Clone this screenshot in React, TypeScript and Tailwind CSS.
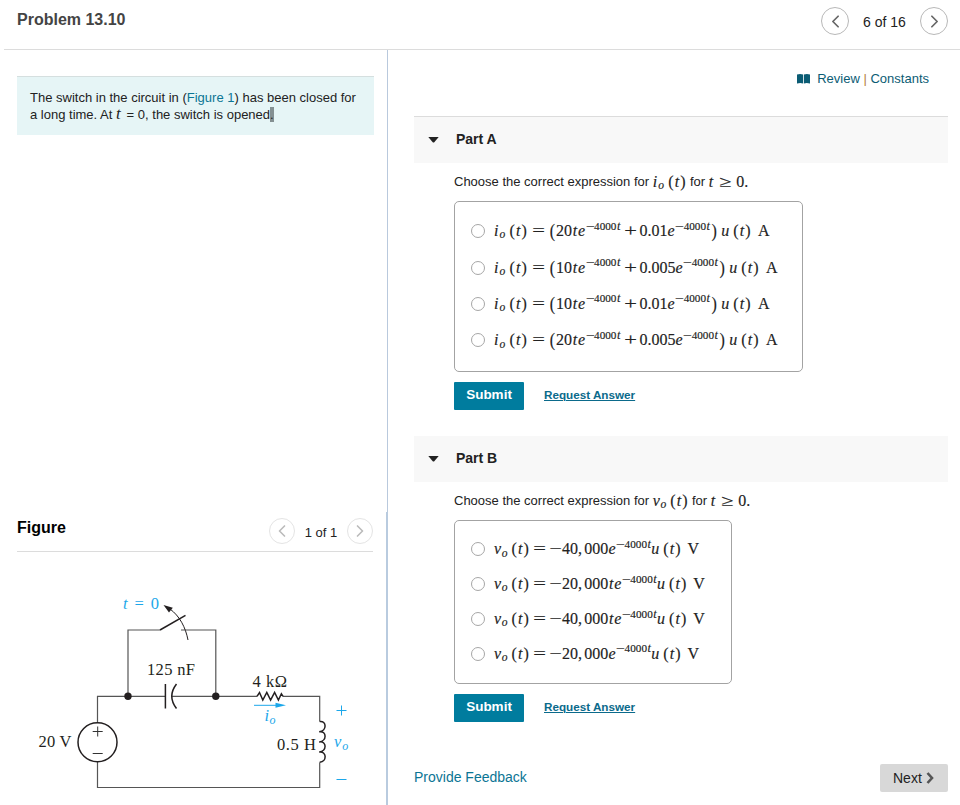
import { useState, type ReactNode } from 'react';
import { ChevronLeft, ChevronRight } from 'lucide-react';
import clsx from 'clsx';

// Stretched operators, wider than the ones in the text font
const Op = ({ children, className }: { children: ReactNode; className?: string }) => (
    <span className={clsx('inline-block w-[0.78em] text-center', className)}>
        <span className="inline-block scale-x-[1.4]">{children}</span>
    </span>
);

const Fn = ({ name }: { name: 'i' | 'v' }) => (
    <>
        <span className={clsx('inline-block italic', name === 'i' ? 'w-[0.35em]' : 'w-[0.48em]')}>{name}</span>
        <sub className="relative -bottom-[0.2em] inline-block w-[0.56em] align-baseline text-[0.72em] italic leading-none">o</sub>
    </>
);

const Arg = () => (
    <span className="ml-[0.19em] mr-[0.02em] inline-block">
        <span className="inline-block w-[0.39em] text-center">(</span>
        <span className="inline-block w-[0.36em] text-center italic">t</span>
        <span className="inline-block w-[0.39em] text-center">)</span>
    </span>
);

const Exp = () => (
    <sup className="relative -top-[0.58em] inline-block align-baseline text-[0.7em] leading-none">
        <Op>−</Op>4000<span className="inline-block w-[0.36em] text-center text-[1.1em] italic leading-none">t</span>
    </sup>
);

const Paren = ({ children }: { children: string }) => (
    <span className="inline-block w-[0.46em] origin-center scale-y-[1.2] text-center">{children}</span>
);

const Term = ({ coef, withT }: { coef: string; withT?: boolean }) => (
    <>
        <span>{coef}</span>
        {withT && <span className="inline-block w-[0.36em] text-center italic">t</span>}
        <span className="inline-block w-[0.47em] text-center italic">e</span>
        <Exp />
    </>
);

const partA = [
    { first: '20', second: '0.01' },
    { first: '10', second: '0.005' },
    { first: '10', second: '0.01' },
    { first: '20', second: '0.005' },
];

const partB = [
    { coef: '40', withT: false },
    { coef: '20', withT: true },
    { coef: '40', withT: true },
    { coef: '20', withT: false },
];

const CurrentExpr = ({ first, second }: { first: string; second: string }) => (
    <>
        <Fn name="i" />
        <Arg />
        <Op className="mx-[0.27em]">=</Op>
        <Paren>(</Paren>
        <Term coef={first} withT />
        <Op className="ml-[0.22em] mr-[0.16em]">+</Op>
        <Term coef={second} />
        <Paren>)</Paren>
        <span className="ml-[0.18em] inline-block w-[0.57em] text-center italic">u</span>
        <Arg />
        <span className="ml-[0.42em]">A</span>
    </>
);

const VoltageExpr = ({ coef, withT }: { coef: string; withT: boolean }) => (
    <>
        <Fn name="v" />
        <Arg />
        <Op className="ml-[0.24em] mr-[0.22em]">=</Op>
        <Op>−</Op>
        {coef}<span className="mr-[0.15em]">,</span>
        <Term coef="000" withT={withT} />
        <span className="-ml-[0.04em] inline-block w-[0.57em] text-center italic">u</span>
        <Arg />
        <span className="ml-[0.38em]">V</span>
    </>
);

const MATH = 'whitespace-nowrap font-["Liberation_Serif",serif] text-[16px] leading-none text-[#222] [-webkit-text-stroke:0.15px]';

interface OptionsProps {
    name: string;
    className: string;
    rowClass: string;
    children: ReactNode[];
}

function Options({ name, className, rowClass, children }: OptionsProps) {
    const [selected, setSelected] = useState<number | null>(null);

    return (
        <div className={clsx('rounded-[5px] border border-[#a3a3a3] pl-4', className)}>
            {children.map((child, i) => (
                <label key={i} className={clsx('flex cursor-pointer items-center', rowClass)}>
                    <input
                        type="radio"
                        name={name}
                        checked={selected === i}
                        onChange={() => setSelected(i)}
                        className="mr-[9px] size-[14px] shrink-0 appearance-none rounded-full border border-[#a6a6a6] bg-white checked:border-4 checked:border-[#007c9e]"
                    />
                    <span className={MATH}>{child}</span>
                </label>
            ))}
        </div>
    );
}

const Prompt = ({ name }: { name: 'i' | 'v' }) => (
    <p className="flex h-[38px] items-center whitespace-nowrap">
        Choose the correct expression for&nbsp;
        <span className={MATH}><Fn name={name} /><Arg /></span>
        &nbsp;for&nbsp;
        <span className={MATH}><i>t</i><Op className="ml-[0.36em] mr-[0.3em]">≥</Op>0.</span>
    </p>
);

const PartHeader = ({ title, className }: { title: string; className?: string }) => (
    <div className={clsx('flex items-center bg-[#f8f8f8] pl-[14px]', className)}>
        <svg width="11" height="6" viewBox="0 0 11 6" className="mr-[17px]">
            <path d="M0.3 0h10.4L6.3 5.2q-.8.8-1.6 0z" fill="#222" />
        </svg>
        <h2 className="pb-0.5 text-[14px] font-bold text-[#222]">{title}</h2>
    </div>
);

const Actions = () => (
    <div className="mt-[10px] flex h-7 items-center">
        <button className="h-7 w-[70px] rounded-[1px] bg-[#007c9e] pb-0.5 text-[13.5px] font-bold text-white">Submit</button>
        <a href="#" className="ml-5 pb-0.5 text-[11.7px] font-bold text-[#0b6a8b] underline underline-offset-1">Request Answer</a>
    </div>
);

const Circuit = () => (
    <svg width="370" height="213" viewBox="17 592 370 213" fill="none" className="block font-['Liberation_Serif',serif] text-[16.5px]">
        <g stroke="#555" strokeWidth="1.2">
            <path d="M128 696.3V630h32M181 630h34.8v66.3" />
            <path d="M97.5 722.5v-26.2H165M172 696.3h85M283 696.3h36.7v25.2" />
            <path d="M97.5 762v25.5h222.2v-25" />
        </g>
        <g stroke="#231f20" strokeWidth="1.5">
            <path d="M160 630l25.5-14.7" />
            <path d="M188 640c-2.5-13-8.5-24-18-31" strokeWidth="1" />
            <path d="M165.400 684v24.500M176.500 684q-9.500 12.300 0 24.500" />
            <circle cx="97.5" cy="742.2" r="19.5" />
            <path d="M257 696.3l2.500-3.800 3.300 7.600 4-7.600 3.800 7.600 4-7.600 3.800 7.600 3-6.300 1.600 2.500" />
            <path d="M319.700 721.500c7-1 7.500 9.500-.500 10.200l.5 0c7-1 7.500 9.500-.5 10.200l.5 0c7-1 7.500 9.500-.5 10.200l.5 0c7-1 7.500 9.500 0 10.200" />
        </g>
        <path d="M92.700 731.500h10M97.700 726.500v10M92.700 753.500h10" stroke="#333" />
        <g fill="#231f20">
            <path d="M163.500 605l9.300 2.700-3.800 4.800z" />
            <circle cx="128" cy="696.3" r="3.700" />
            <circle cx="215.8" cy="696.3" r="3.700" />
            <text x="147" y="674.500" textLength="48">125 nF</text>
            <text x="252.500" y="686.500" textLength="34.500">4 kΩ</text>
            <text x="277" y="749.500" textLength="39">0.5 H</text>
            <text x="38.500" y="746.500" textLength="33">20 V</text>
        </g>
        <g stroke="#1ba7ea">
            <path d="M254 705.300h23" />
            <path d="M336.500 710.500h10M341.500 705.500v10M336.500 779.500h10" />
        </g>
        <g fill="#1ba7ea">
            <path d="M275.500 702.800l10.500 2.500-10.500 2.500z" />
            <text x="123" y="609" textLength="36"><tspan fontStyle="italic">t</tspan> = 0</text>
            <text x="264.500" y="721" fontStyle="italic">i<tspan dx="0.500" dy="2.500" fontSize="12">o</tspan></text>
            <text x="334" y="747" fontStyle="italic">v<tspan dx="1" dy="2.500" fontSize="12">o</tspan></text>
        </g>
    </svg>
);

export default function App() {
    return (
        <div className="flex h-[805px] w-[960px] flex-col overflow-hidden bg-white font-['Liberation_Sans',Arial,sans-serif] text-[13px] text-[#222]">
            <header className="ml-1 flex h-[50px] shrink-0 items-start justify-between border-b border-[#dcdcdc] pl-[13px] pr-3">
                <h1 className="pt-2 text-[16px] font-bold text-[#444]">Problem 13.10</h1>
                <div className="flex items-center pt-[7px] text-[14px]">
                    <button className="flex size-7 items-center justify-center rounded-full border border-[#b8b8b8]">
                        <ChevronLeft className="size-[21px] text-[#666]" />
                    </button>
                    <span className="w-[71px] pt-0.5 text-center">6 of 16</span>
                    <button className="flex size-7 items-center justify-center rounded-full border border-[#b8b8b8]">
                        <ChevronRight className="size-[21px] text-[#666]" />
                    </button>
                </div>
            </header>

            <div className="flex grow">
                {/* Problem statement and figure */}
                <aside className="flex w-[388px] shrink-0 flex-col">
                    <div className="h-[462px] border-r border-[#b9c9dd] pl-[17px] pr-[13px] pt-[26px]">
                        <div className="h-[59px] border-t border-[#d5dfdf] bg-[#e6f5f6] pl-[13px] pt-[13px] leading-4">
                            <p className="h-[15px] whitespace-nowrap">The switch in the circuit in (<a href="#" className="text-[#0b7594]">Figure 1</a>) has been closed for</p>
                            <p className="whitespace-nowrap">a long time. At <i className="mr-px inline-block w-[6px] font-['Liberation_Serif',serif] text-[17px] leading-none">t</i> = 0, the switch is opened<span className="bg-[#849092]">.</span></p>
                        </div>
                    </div>
                    <div className="grow border-r-2 border-[#b9cbdf] pl-[17px]">
                        <div className="flex h-10 w-[356px] border-b border-[#dcdcdc]">
                            <h2 className="grow pt-1 text-[16px] font-bold text-black">Figure</h2>
                            <div className="flex h-[26px] items-center pt-[12px]">
                                <span className="flex size-[26px] items-center justify-center rounded-full border border-[#e4e4e4]">
                                    <ChevronLeft className="size-5 text-[#bbb]" />
                                </span>
                                <span className="w-[52px] pt-1 text-center">1 of 1</span>
                                <span className="flex size-[26px] items-center justify-center rounded-full border border-[#e4e4e4]">
                                    <ChevronRight className="size-5 text-[#bbb]" />
                                </span>
                            </div>
                        </div>
                        <div className="mt-10">
                            <Circuit />
                        </div>
                    </div>
                </aside>

                {/* Questions */}
                <main className="flex grow flex-col pl-[26px] pr-3">
                    <div className="flex h-[66px] items-center justify-end pb-2 pr-[19px] text-[#0b5c74]">
                        <svg width="13" height="10" viewBox="0 0 13 10" className="mr-[7px]">
                            <path d="M0 .5Q3.500-.3 6.100 .6V9.500Q3.500 8.700 0 9.500zM6.900 .6Q9.500-.3 13 .5V9.500Q9.500 8.700 6.900 9.500z" fill="#0b5c74" />
                        </svg>
                        <span>Review <span className="text-[#b5803c]">|</span> Constants</span>
                    </div>

                    <PartHeader title="Part A" className="h-[47px] border-t border-[#dcdcdc]" />
                    <section className="pl-10">
                        <Prompt name="i" />
                        <Options name="current" className="h-[171px] w-[349px] pt-[11px]" rowClass="h-[36.4px]">
                            {partA.map((o, i) => <CurrentExpr key={i} {...o} />)}
                        </Options>
                        <Actions />
                    </section>

                    <PartHeader title="Part B" className="mt-[26px] h-[46px]" />
                    <section className="pl-10">
                        <Prompt name="v" />
                        <Options name="voltage" className="h-[164px] w-[278px] pt-[11px]" rowClass="h-[34.8px]">
                            {partB.map((o, i) => <VoltageExpr key={i} {...o} />)}
                        </Options>
                        <Actions />
                    </section>

                    <footer className="mt-[42px] flex h-7 items-center justify-between">
                        <a href="#" className="pb-0.5 text-[14px] text-[#0b7594]">Provide Feedback</a>
                        <button className="flex h-7 w-[68px] items-center rounded-[2px] bg-[#d8d8d8] pl-[13px] text-[14px]">
                            Next
                            <svg width="8" height="12" viewBox="0 0 8 12" className="ml-1">
                                <path d="M1.500 1l4.500 5-4.500 5" fill="none" stroke="#555" strokeWidth="2.600" />
                            </svg>
                        </button>
                    </footer>
                </main>
            </div>
        </div>
    );
}
